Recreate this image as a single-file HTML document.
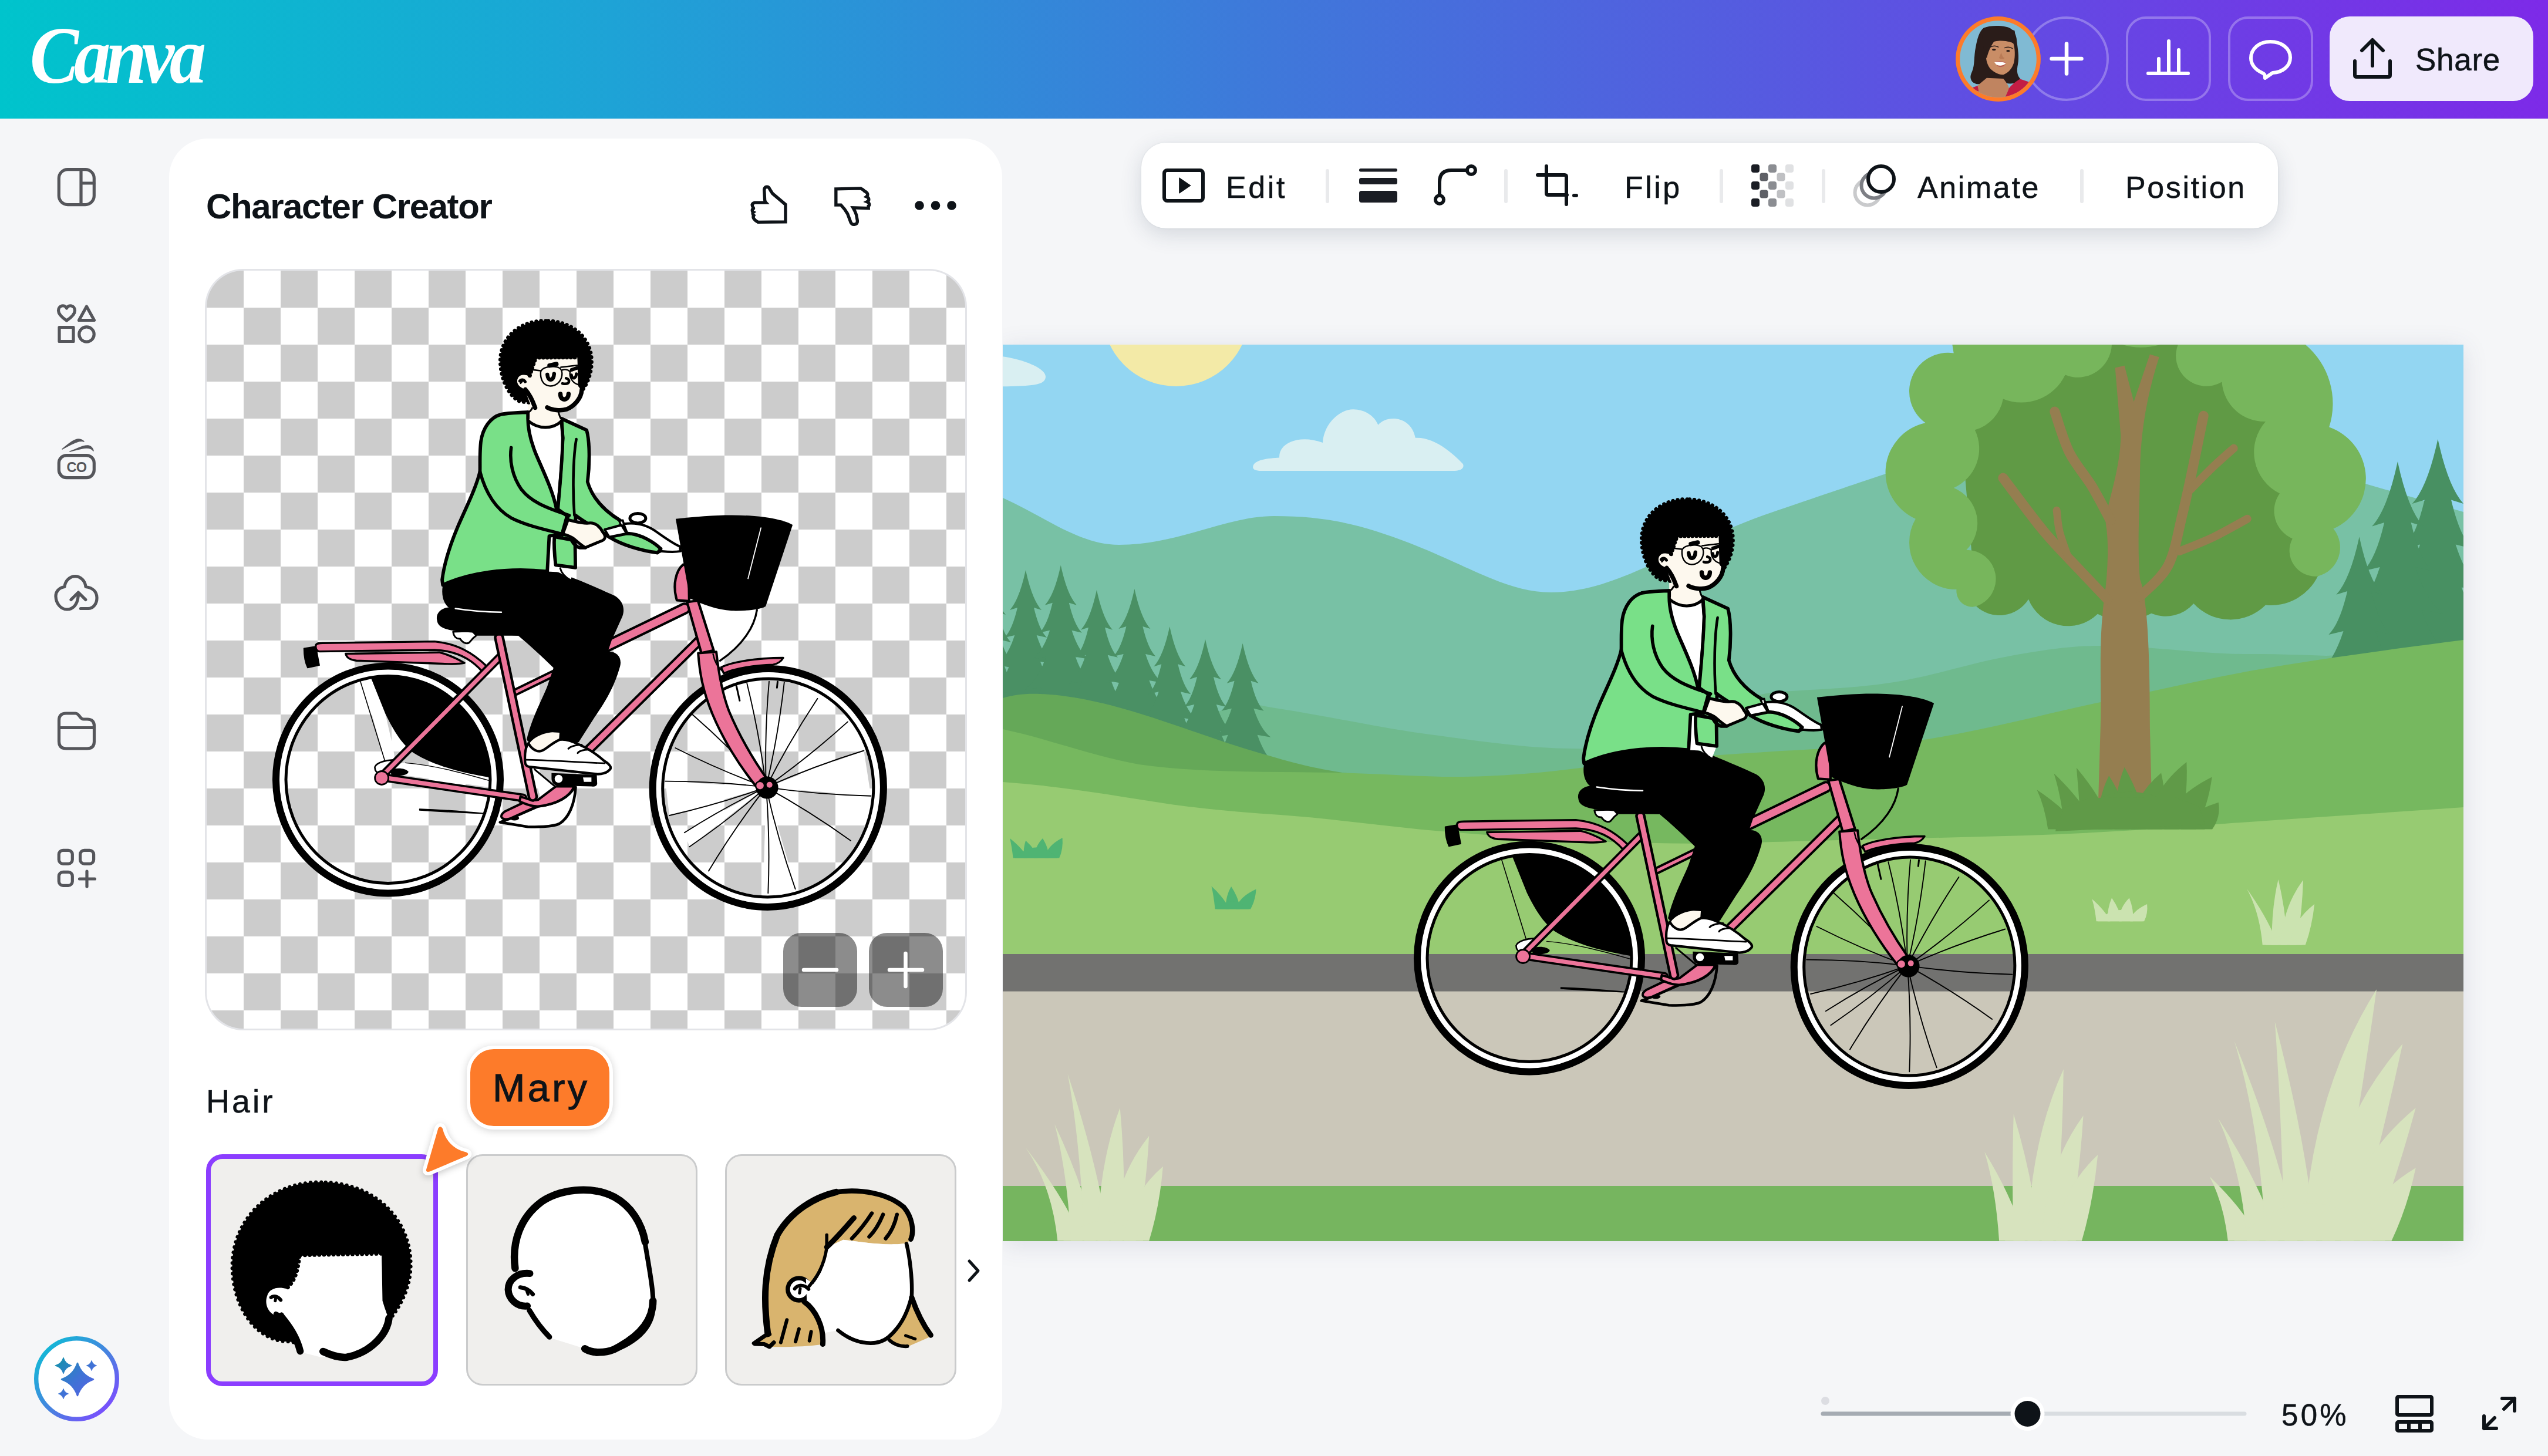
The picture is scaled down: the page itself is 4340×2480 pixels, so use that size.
<!DOCTYPE html>
<html lang="en">
<head>
<meta charset="utf-8">
<title>Canva Character Creator</title>
<style>
*{box-sizing:border-box;margin:0;padding:0}
html,body{width:4340px;height:2480px;overflow:hidden;background:#f5f6f8;font-family:"Liberation Sans",sans-serif;color:#0e1318}
.abs{position:absolute}
#hdr{position:absolute;left:0;top:0;width:4340px;height:202px;background:linear-gradient(90deg,#00c4cc 0%,#1ea3d6 24%,#3f78da 50%,#5e50e2 76%,#7d2ae8 100%)}
#logo{position:absolute;left:50px;top:20px;transform:scaleX(.905);transform-origin:8px 0;font-family:"Liberation Serif",serif;font-style:italic;font-weight:bold;font-size:138px;line-height:150px;color:#fff;letter-spacing:-9px;white-space:nowrap}
.hbtn{position:absolute;top:28px;width:145px;height:144px;border-radius:34px;border:4px solid rgba(255,255,255,.28)}
#share{position:absolute;left:3968px;top:28px;width:347px;height:144px;border-radius:34px;background:#f0e9fc}
#share span{position:absolute;left:146px;top:44px;font-size:53px;line-height:60px;letter-spacing:.7px;color:#0e1318}
#panel{position:absolute;left:288px;top:236px;width:1419px;height:2216px;border-radius:66px;background:#fff}
#title{position:absolute;left:351px;top:318px;font-weight:bold;font-size:60px;line-height:68px;letter-spacing:-1.4px;color:#0e1318;white-space:nowrap}
#checker{position:absolute;left:352px;top:461px;width:1292px;height:1291px;border-radius:62px;overflow:hidden;background-color:#fff;
 background-image:conic-gradient(#fff 25%,#ccc 0 50%,#fff 0 75%,#ccc 0);background-size:126px 126px;background-position:0 0;box-shadow:0 0 0 3px #e3e4e8}
.zbtn{position:absolute;top:1589px;width:126px;height:126px;border-radius:31px;background:rgba(0,0,0,.45)}
#hairlbl{position:absolute;left:351px;top:1842px;font-size:55.5px;line-height:68px;letter-spacing:4px}
.opt{position:absolute;top:1966px;width:394px;height:394px;border-radius:28px;background:#f0efed;border:3px solid #cacbcc;overflow:hidden}
.opt.sel{border:8px solid #8b3dff;left:351px!important;width:395px;height:395px;top:1965.5px}
#mary{position:absolute;left:795px;top:1781px;width:249px;height:143px;border-radius:46px;background:#fd7b2a;border:6px solid #fff;box-shadow:0 2px 14px rgba(0,0,0,.18)}
#mary span{position:absolute;left:38px;top:28px;font-size:66.5px;line-height:76px;color:#0e1318;letter-spacing:4.4px;-webkit-text-stroke:1px #0e1318}
#tb{position:absolute;left:1944px;top:243px;width:1936px;height:146px;border-radius:42px;background:#fff;box-shadow:0 10px 36px rgba(40,55,80,.16),0 0 3px rgba(40,55,80,.10)}
.tbt,#hairlbl,#pct,#share span{-webkit-text-stroke:.5px #0e1318}
.tbt{position:absolute;top:289px;font-size:52px;line-height:60px;color:#0e1318;letter-spacing:2.6px;white-space:nowrap}
.dv{position:absolute;top:288px;width:6px;height:58px;border-radius:3px;background:#e9eaec}
#pct{position:absolute;left:3886px;top:2381px;font-size:51px;line-height:60px;letter-spacing:4.3px}
#stage{position:absolute;left:1708px;top:587px;width:2488px;height:1527px;box-shadow:0 6px 40px rgba(60,70,110,.13);background:#93d6f2;overflow:hidden;clip-path:inset(-80px -80px -80px 0)}
svg{position:absolute;overflow:visible}
</style>
</head>
<body>
<svg width="0" height="0" style="left:0;top:0"><defs><g id="rider"><clipPath id="rwc"><ellipse cx="661" cy="1328" rx="175" ry="177.5"/></clipPath>
<g clip-path="url(#rwc)">
<path d="M620.1,1125.3L701.0,1120.0L818.5,1164.4L862.9,1268.8L857.7,1341.9L831.6,1323.7C792.4,1317.1 740.2,1305.4 703.7,1281.9C682.8,1266.2 669.7,1242.7 656.7,1216.6Z" fill="#000" />
<path d="M610.2,1148.8L655.6,1296.2" fill="none" stroke="#000" stroke-width="1.6" stroke-linejoin="round" stroke-linecap="round" />
<path d="M690.6,1299.4C740.2,1303.3 792.4,1317.6 847.2,1333.6" fill="none" stroke="#000" stroke-width="1.4" stroke-linejoin="round" stroke-linecap="round" />
</g>
<g transform="rotate(0 661 1328)" fill="none"><ellipse cx="661" cy="1328" rx="190.8" ry="193.3" stroke="#000" stroke-width="12.5"/><ellipse cx="661" cy="1328" rx="180.5" ry="183.0" stroke="#fff" stroke-width="9"/><ellipse cx="661" cy="1328" rx="174" ry="176.5" stroke="#000" stroke-width="5"/></g>
<path d="M714.6,1377.9C753.2,1379.0 792.4,1382.4 827.6,1385.8C792.4,1385.0 753.2,1382.4 714.6,1380.0Z" fill="#000" stroke="#000" stroke-width="1.5" stroke-linejoin="round" stroke-linecap="round" />
<g transform="rotate(5 1308.3 1342)" fill="none"><ellipse cx="1308.3" cy="1342" rx="196.3" ry="202.8" stroke="#000" stroke-width="12.5"/><ellipse cx="1308.3" cy="1342" rx="186.0" ry="192.5" stroke="#fff" stroke-width="9"/><ellipse cx="1308.3" cy="1342" rx="179.5" ry="186" stroke="#000" stroke-width="5"/></g>
<path d="M1304.9,1340.9Q1293.9,1251.5 1272.3,1164.1M1304.9,1340.9Q1302.0,1250.6 1310.0,1160.7M1304.9,1340.9Q1325.7,1252.6 1335.8,1162.4M1304.9,1340.9Q1344.1,1262.8 1392.4,1189.9M1304.9,1340.9Q1377.8,1289.3 1444.0,1229.4M1304.9,1340.9Q1386.3,1304.7 1471.4,1278.5M1304.9,1340.9Q1393.7,1353.7 1483.4,1355.7M1304.9,1340.9Q1379.7,1382.1 1449.1,1431.9M1304.9,1340.9Q1324.6,1429.1 1354.7,1514.3M1304.9,1340.9Q1312.0,1430.9 1308.3,1521.2M1304.9,1340.9Q1251.7,1409.2 1207.0,1483.4M1304.9,1340.9Q1242.7,1395.5 1174.4,1442.2M1304.9,1340.9Q1233.0,1375.4 1165.8,1418.2M1304.9,1340.9Q1223.9,1369.9 1140.1,1389.0M1304.9,1340.9Q1219.4,1330.6 1133.2,1330.6M1304.9,1340.9Q1225.6,1312.1 1150.4,1274.0M1304.9,1340.9Q1246.0,1275.3 1179.6,1217.3" stroke="#000" stroke-width="1.9" fill="none" stroke-linecap="round"/>
<path d="M1254.4,1168.6L1259.9,1193.3" fill="none" stroke="#000" stroke-width="3" stroke-linejoin="round" stroke-linecap="round" />
<path d="M1324.5,1161.0L1323.4,1171.3" fill="none" stroke="#000" stroke-width="3" stroke-linejoin="round" stroke-linecap="round" />
<path d="M537.9,1099.2C539.2,1095.2 544.4,1095.2 549.6,1095.2L740.2,1092.6C779.4,1096.5 805.5,1112.2 829.5,1135.2L821.6,1144.1C805.5,1125.3 779.4,1108.3 740.2,1107.0L544.4,1109.6C539.2,1109.6 537.1,1104.4 537.9,1099.2Z" fill="#ec7499" stroke="#000" stroke-width="3.4" stroke-linejoin="round" stroke-linecap="round" />
<path d="M588.8,1113.5L748.0,1111.2C768.9,1116.1 782.0,1124.0 791.1,1129.2C779.4,1132.0 766.3,1131.0 753.2,1130.5L607.1,1125.3C596.6,1124.0 590.1,1120.0 588.8,1113.5Z" fill="#ec7499" stroke="#000" stroke-width="3.4" stroke-linejoin="round" stroke-linecap="round" />
<path d="M517.8,1104.4L537.9,1101.2L543.9,1133.1L524.1,1137.3C519.6,1127.9 517.8,1114.8 517.8,1104.4Z" fill="#000" stroke="#000" stroke-width="2" stroke-linejoin="round" stroke-linecap="round" />
<path d="M851.7,1400.6L869.9,1393.8L916.7,1373.4C950.0,1369.6 971.1,1356.0 977.9,1340.9L980.5,1340.9C978.7,1371.1 968.1,1393.8 953.0,1402.9C940.9,1408.9 910.7,1408.9 898.6,1408.2Z" fill="none" stroke="#000" stroke-width="4.6" stroke-linejoin="round" stroke-linecap="round" />
<path d="M910.7,1310.7L945.4,1339.7" fill="none" stroke="#000" stroke-width="3" stroke-linejoin="round" stroke-linecap="round" />
<ellipse cx="876.2" cy="1393.5" rx="8" ry="4" fill="#000"/>
<path d="M895.6,1365.1L916.7,1372.6L869.9,1393.8C862.3,1396.8 854.8,1395.3 854.0,1390.8C853.6,1387.8 856.3,1384.7 860.8,1381.7Z" fill="#ec7499" stroke="#000" stroke-width="4" stroke-linejoin="round" stroke-linecap="round" />
<path d="M638.4,1306.7C641.0,1298.9 656.7,1294.9 669.7,1294.4L671.0,1304.1L648.8,1318.4C642.3,1317.1 638.4,1313.2 638.4,1306.7Z" fill="#fff" stroke="#000" stroke-width="2.6" stroke-linejoin="round" stroke-linecap="round" />
<path d="M852.4,1118.0L651.4,1321.0" stroke="#000" stroke-width="14.5" stroke-linecap="round"/>
<path d="M852.4,1118.0L651.4,1321.0" stroke="#ec7499" stroke-width="6.9" stroke-linecap="round"/>
<path d="M652.0,1324.2L891.0,1359.0" stroke="#000" stroke-width="14.5" stroke-linecap="round"/>
<path d="M652.0,1324.2L891.0,1359.0" stroke="#ec7499" stroke-width="7.3" stroke-linecap="round"/>
<circle cx="650.1" cy="1325.0" r="11.5" fill="#ec7499" stroke="#000" stroke-width="2.8"/>
<path d="M664.5,1311.9C674.9,1306.7 690.6,1308.0 695.8,1314.5C694.5,1321.0 680.2,1322.3 667.1,1321.0Z" fill="#000" />
<path d="M886.5,1356.8C898.6,1360.6 907.7,1365.1 916.7,1362.1L946.9,1339.4L977.9,1339.4C971.1,1356.0 950.0,1369.6 916.7,1373.4C904.6,1374.2 892.5,1368.1 885.0,1365.1Z" fill="#ec7499" stroke="#000" stroke-width="4" stroke-linejoin="round" stroke-linecap="round" />
<path d="M878,1179L960,1139" stroke="#000" stroke-width="13" stroke-linecap="round"/>
<path d="M878,1179L960,1139" stroke="#ec7499" stroke-width="5" stroke-linecap="round"/>
<path d="M1000,1117L1166,1036.5" stroke="#000" stroke-width="20.5" stroke-linecap="round"/>
<path d="M1000,1117L1166,1036.5" stroke="#ec7499" stroke-width="12.5" stroke-linecap="round"/>
<path d="M985,1294.6L1195,1087" stroke="#000" stroke-width="17.5" stroke-linecap="round"/>
<path d="M985,1294.6L1195,1087" stroke="#ec7499" stroke-width="9.5" stroke-linecap="round"/>
<path d="M1163.6,961.6C1151.3,971.9 1145.1,996.6 1152.9,1022.4L1173.9,1023.8L1172.9,963.6Z" fill="#ec7499" stroke="#000" stroke-width="4.2" stroke-linejoin="round" stroke-linecap="round" />
<path d="M1170.2,1025.5L1188.8,1023.0L1215.6,1107.9L1194.6,1112.4Z" fill="#ec7499" stroke="#000" stroke-width="4.2" stroke-linejoin="round" stroke-linecap="round" />
<path d="M1228.3,1136.7C1244.8,1128.1 1286.0,1120.5 1334.1,1120.5C1330.6,1126.4 1323.8,1130.8 1316.9,1132.2C1286.0,1133.2 1251.7,1138.4 1232.8,1147.0Z" fill="#ec7499" stroke="#000" stroke-width="3.4" stroke-linejoin="round" stroke-linecap="round" />
<path d="M1189.2,1112.6L1220.1,1110.2C1224.2,1148.7 1231.1,1183.0 1241.4,1210.5C1258.5,1251.7 1282.6,1292.9 1306.6,1327.2L1287.7,1339.2C1258.5,1303.2 1231.1,1258.5 1213.9,1217.3C1196.7,1176.1 1191.6,1145.2 1189.2,1112.6Z" fill="#ec7499" stroke="#000" stroke-width="4" stroke-linejoin="round" stroke-linecap="round" />
<path d="M1214.6,1114.3C1217.3,1128.1 1224.2,1138.4 1231.1,1143.5" fill="none" stroke="#000" stroke-width="2.5" stroke-linejoin="round" stroke-linecap="round" />
<circle cx="1306.6" cy="1341.6" r="19" fill="#000"/>
<circle cx="1294.6" cy="1338.2" r="7.5" fill="#ec7499" stroke="#000" stroke-width="2.5"/>
<circle cx="1310.7" cy="1336.8" r="5" fill="#ec7499"/>
<path d="M850,1086L907.5,1357" stroke="#000" stroke-width="17.5" stroke-linecap="round"/>
<path d="M850,1086L907.5,1357" stroke="#ec7499" stroke-width="8.7" stroke-linecap="round"/>
<path d="M939.4,1316.7L1016.5,1319.7L1017.2,1334.9C1016.5,1339.4 1011.9,1340.1 1007.4,1339.4L948.5,1337.9C942.4,1337.1 939.4,1331.8 939.4,1325.8Z" fill="#000" />
<circle cx="951.5" cy="1326.5" r="6.8" fill="#fff"/>
<path d="M993.0,1324.3L1007.4,1324.3L1007.4,1331.8L994.6,1331.8Z" fill="#fff" />
<path d="M771.8,1076.1C773.1,1085.3 778.3,1088.4 783.5,1087.9C788.7,1095.7 796.6,1098.3 800.5,1093.1C804.4,1087.9 807.0,1085.3 810.9,1082.7L809.6,1074.8Z" fill="#fff" stroke="#000" stroke-width="3" stroke-linejoin="round" stroke-linecap="round" />
<path d="M765.2,1034.4C749.6,1035.7 741.8,1046.1 744.4,1056.6C745.7,1069.6 760.0,1074.8 804.4,1077.4L882.7,1082.7L867.0,1043.5Z" fill="#000" />
<path d="M756.1,983.5C804.4,970.4 882.7,962.6 929.6,967.8C961.0,977.0 1013.2,999.1 1047.1,1014.8C1060.1,1022.6 1065.3,1035.7 1060.1,1050.0L1041.9,1090.5L1035.3,1110.1C1049.7,1108.7 1060.1,1119.2 1056.2,1134.8C1049.7,1158.3 1039.2,1184.4 1013.2,1221.0L985.8,1264.0L961.0,1273.2L908.8,1273.2L897.0,1260.1C906.2,1221.0 924.4,1189.6 932.3,1168.8C937.5,1153.1 941.4,1142.7 942.7,1137.5C921.8,1116.6 898.3,1095.7 882.7,1082.7L809.6,1082.7L765.2,1035.7C752.2,1025.2 750.9,1007.0 756.1,988.7Z" fill="#000" />
<path d="M775.7,1036.5C804.4,1040.9 830.5,1042.5 854.0,1042.7" fill="none" stroke="#fff" stroke-width="2.5" stroke-linejoin="round" stroke-linecap="round" />
<path d="M900.1,1266.1C894.8,1272.9 893.3,1283.5 894.4,1298.6C894.8,1303.1 897.1,1305.4 901.6,1306.1L1013.4,1318.2C1024.0,1319.7 1034.6,1316.7 1039.9,1309.2C1041.4,1304.6 1034.6,1299.3 1028.6,1295.6C1016.5,1285.0 998.3,1272.9 983.2,1266.9C974.2,1262.3 962.1,1258.5 953.0,1260.0C940.9,1265.3 931.8,1274.4 924.3,1278.2C916.7,1282.0 906.1,1277.4 900.1,1266.1Z" fill="#fff" />
<path d="M901.6,1266.9C907.7,1256.3 925.8,1248.0 940.9,1247.2L953.0,1248.0L952.2,1259.6C940.9,1265.3 931.8,1274.4 924.3,1278.2C916.7,1281.2 906.9,1276.7 901.6,1266.9Z" fill="#fdf8ee" />
<path d="M900.1,1266.1C894.8,1272.9 893.3,1283.5 894.4,1298.6C894.8,1303.1 897.1,1305.4 901.6,1306.1L1013.4,1318.2C1024.0,1319.7 1034.6,1316.7 1039.9,1309.2C1041.4,1304.6 1034.6,1299.3 1028.6,1295.6C1016.5,1285.0 998.3,1272.9 983.2,1266.9C974.2,1262.3 962.1,1258.5 953.0,1260.0C940.9,1265.3 931.8,1274.4 924.3,1278.2C916.7,1282.0 906.1,1277.4 900.1,1266.1" fill="none" stroke="#000" stroke-width="4.2" stroke-linejoin="round" stroke-linecap="round" />
<path d="M895.6,1294.1C925.8,1294.1 986.2,1298.6 1030.1,1300.1" fill="none" stroke="#000" stroke-width="2.6" stroke-linejoin="round" stroke-linecap="round" />
<path d="M968.1,1275.2C971.1,1271.4 980.2,1269.1 990.8,1268.4M984.0,1282.7C986.2,1278.9 993.8,1277.1 1002.9,1276.7" fill="none" stroke="#000" stroke-width="3" stroke-linejoin="round" stroke-linecap="round" />
<path d="M1289.3,1038.9C1285.2,1066.7 1266.7,1097.6 1226.5,1125.4" fill="none" stroke="#000" stroke-width="3.4" stroke-linejoin="round" stroke-linecap="round" />
<path d="M1150.9,883.7C1184.2,880.2 1215.2,877.5 1246.1,877.5C1287.3,877.5 1328.5,882.2 1350.1,894.0L1304.2,1032.7C1293.5,1038.9 1266.7,1040.9 1246.1,1040.3C1221.3,1038.9 1196.6,1029.6 1175.0,1019.3Z" fill="#000" />
<path d="M1296.1,899.1L1274.1,985.5" fill="none" stroke="#fff" stroke-width="1.8" stroke-linejoin="round" stroke-linecap="round" />
<ellipse cx="1086.4" cy="882.7" rx="13.5" ry="8.2" fill="#fff" stroke="#000" stroke-width="5"/>
<path d="M1061.6,892.5C1081.2,889.5 1101.8,893.6 1118.3,905.9C1132.7,916.2 1147.2,926.5 1157.9,930.7L1159.1,938.9C1147.2,941.0 1136.9,939.9 1126.5,938.9L1118.3,942.0C1101.8,922.4 1081.2,908.0 1064.7,907.0Z" fill="#fff" stroke="#000" stroke-width="4" stroke-linejoin="round" stroke-linecap="round" />
<path d="M956.4,713.0L999.2,732.7C1004.7,752.5 1004.7,789.9 1000.8,820.7C1009.1,849.2 1031.1,871.2 1056.4,886.6L1059.7,888.8L1067.4,908.6L1037.7,914.7C1015.7,899.8 993.7,888.8 980.5,877.8L979.5,920.7L944.3,914.1L949.8,865.7L958.6,745.9Z" fill="#79e088" stroke="#000" stroke-width="5.8" stroke-linejoin="round" stroke-linecap="round" />
<path d="M1037.7,914.7L1067.4,908.6C1092.6,908.6 1116.8,926.2 1125.6,934.9L1120.1,941.5C1092.6,938.2 1059.7,928.4 1037.7,914.7Z" fill="#79e088" stroke="#000" stroke-width="5.8" stroke-linejoin="round" stroke-linecap="round" />
<path d="M1030.0,902.0L1058.6,894.3L1067.4,908.6L1037.7,914.7Z" fill="#fff" stroke="#000" stroke-width="4" stroke-linejoin="round" stroke-linecap="round" />
<path d="M1054.8,887.7L1060.8,886.2L1063.0,894.3L1057.9,895.4Z" fill="#fff" stroke="#000" stroke-width="3.4" stroke-linejoin="round" stroke-linecap="round" />
<path d="M981.6,748.1C976.2,778.9 975.1,833.8 978.4,877.8" fill="none" stroke="#000" stroke-width="4.6" stroke-linejoin="round" stroke-linecap="round" />
<path d="M932.2,913.0L944.3,914.1C943.2,928.4 944.3,943.7 946.5,962.4L980.1,966.8L971.8,987.7L952.0,974.5L932.2,973.4Z" fill="#fff" />
<path d="M954.2,967.9C956.4,976.7 963.0,983.3 971.8,988.1" fill="none" stroke="#000" stroke-width="3" stroke-linejoin="round" stroke-linecap="round" />
<path d="M944.3,914.1L979.5,920.7L980.1,966.8L946.5,962.4C944.3,943.7 943.2,928.4 944.3,914.1Z" fill="#79e088" stroke="#000" stroke-width="5.8" stroke-linejoin="round" stroke-linecap="round" />
<path d="M899.2,688.8L899.2,716.3C916.8,731.6 941.0,731.6 956.4,717.4L953.1,706.4L949.8,693.2Z" fill="#fdf8ee" />
<path d="M899.2,716.3C916.8,731.6 941.0,731.6 956.4,717.4L958.6,745.9C957.5,789.9 953.1,833.8 949.8,865.7L947.6,865.7C941.0,833.8 923.4,798.7 912.4,772.3C903.6,750.3 899.2,730.5 899.2,716.3Z" fill="#fff" stroke="#000" stroke-width="5" stroke-linejoin="round" stroke-linecap="round" />
<path d="M899.2,702.0C883.8,703.1 866.3,703.1 853.1,705.9C835.5,710.8 822.3,728.4 819.0,752.5C816.8,772.3 817.9,789.9 817.5,803.1C811.3,829.5 795.9,860.2 780.5,895.4C767.4,926.2 756.4,961.3 753.1,987.7L754.2,996.5C795.9,976.7 861.9,965.7 932.2,973.4L935.5,913.0L958.6,909.7L966.3,878.9L947.6,865.7C941.0,833.8 923.4,798.7 912.4,772.3C903.6,750.3 899.2,728.4 899.2,713.0Z" fill="#79e088" stroke="#000" stroke-width="5.8" stroke-linejoin="round" stroke-linecap="round" />
<path d="M870.7,762.4C867.4,785.5 872.9,811.9 888.2,833.8C903.6,853.6 927.8,864.6 969.6,877.8" fill="none" stroke="#000" stroke-width="5.6" stroke-linejoin="round" stroke-linecap="round" />
<path d="M817.5,803.1C826.7,838.2 844.3,866.8 870.7,882.2C897.0,895.4 927.8,902.0 958.6,909.7" fill="none" stroke="#000" stroke-width="5.6" stroke-linejoin="round" stroke-linecap="round" />
<path d="M966.9,878.5L958.1,910.1" fill="none" stroke="#000" stroke-width="7.5" stroke-linejoin="round" stroke-linecap="round" />
<path d="M956.4,716.3L958.6,745.9C957.5,789.9 953.1,833.8 950.4,865.7" fill="none" stroke="#000" stroke-width="5.6" stroke-linejoin="round" stroke-linecap="round" />
<path d="M974.0,920.7C978.4,928.4 982.7,931.6 987.1,932.7L997.0,932.7" fill="none" stroke="#000" stroke-width="6" stroke-linejoin="round" stroke-linecap="round" />
<path d="M967.4,885.5C982.7,888.8 993.7,892.1 1002.5,891.0C1013.5,888.8 1022.3,897.6 1026.7,906.4C1033.3,913.0 1031.1,919.6 1023.4,921.8L997.0,932.7C989.3,928.4 982.7,921.8 978.4,918.5C971.8,913.0 963.0,910.8 958.6,909.7Z" fill="#fdf8ee" stroke="#000" stroke-width="5" stroke-linejoin="round" stroke-linecap="round" />
<path d="M929.8,546.4C887.9,545.3 852.2,572.9 852.2,614.8C852.2,643.6 865.2,671.8 882.4,682.4C890.7,685.9 901.6,684.1 906.5,687.3L911.3,693.8L904.4,657.4L984.1,657.4L991.6,665.3C1002.6,650.5 1008.0,632.6 1007.6,614.8C1007.6,575.6 975.1,546.4 929.8,546.4Z" fill="#000" stroke="#000" stroke-width="6.5" stroke-linejoin="round" stroke-linecap="round" stroke-dasharray="0.1 8"/>
<path d="M912.6,609.0L983.8,609.0L985.2,657.4C992.3,665.6 989.6,678.0 978.6,689.0C970.3,697.2 958.0,701.3 945.6,698.6L951.1,701.3L955.2,715.1L901.6,715.1L906.5,694.4C901.6,684.8 896.2,671.1 894.8,662.9C882.4,660.1 878.3,650.5 882.4,643.6C885.2,638.1 893.4,636.8 901.6,640.9Z" fill="#fdf8ee" />
<path d="M983.4,606.5L984.7,657.4C989.6,662.9 991.6,665.6 992.3,667.7C1003.3,650.5 1011.5,629.9 1006.0,605.2Z" fill="#000" />
<path d="M911.9,609.0L983.4,608.7" fill="none" stroke="#000" stroke-width="7" stroke-linejoin="round" stroke-linecap="round" stroke-dasharray="0.1 6.6"/>
<path d="M913.3,607.9C909.9,616.2 905.8,628.5 902.3,640.2" fill="none" stroke="#000" stroke-width="7" stroke-linejoin="round" stroke-linecap="round" stroke-dasharray="0.1 6.6"/>
<path d="M896.2,602.4L914.0,607.9L902.3,640.9L894.8,638.1Z" fill="#000" />
<path d="M990.9,664.2C990.2,678.0 978.6,691.7 964.8,697.2C955.2,700.2 940.1,698.6 932.1,693.9" fill="none" stroke="#000" stroke-width="7.5" stroke-linejoin="round" stroke-linecap="round" />
<path d="M894.8,663.5C901.6,671.1 907.1,682.1 911.5,694.4" fill="none" stroke="#000" stroke-width="7.5" stroke-linejoin="round" stroke-linecap="round" />
<path d="M906.5,695.1C905.1,698.6 902.3,701.3 898.2,703.4" fill="none" stroke="#000" stroke-width="3" stroke-linejoin="round" stroke-linecap="round" />
<path d="M951.1,701.6C952.5,706.8 953.8,710.9 955.9,713.7" fill="none" stroke="#000" stroke-width="3" stroke-linejoin="round" stroke-linecap="round" />
<path d="M885.4,649.1C887.9,645.7 892.3,646.4 894.5,650.2" fill="none" stroke="#000" stroke-width="5" stroke-linejoin="round" stroke-linecap="round" />
<path d="M890.0,647.7C889.3,650.5 887.9,651.9 886.8,652.6" fill="none" stroke="#000" stroke-width="3" stroke-linejoin="round" stroke-linecap="round" />
<path d="M920.9,634.0C922.3,625.8 937.4,623.0 948.3,625.1C956.6,626.5 958.7,634.0 956.6,642.3C953.8,651.9 945.6,658.0 936.0,657.4C925.0,656.0 920.2,646.4 920.9,634.0Z" fill="none" stroke="#000" stroke-width="2.4" stroke-linejoin="round" stroke-linecap="round" />
<path d="M971.0,632.6C969.6,640.9 973.1,651.9 985.4,655.3M971.0,632.6C974.4,629.9 979.9,628.5 984.1,628.2" fill="none" stroke="#000" stroke-width="2.4" stroke-linejoin="round" stroke-linecap="round" />
<path d="M955.2,625.5L983.0,622.3M957.7,630.2C962.1,628.5 967.6,629.9 971.0,632.9M905.8,629.6L920.9,631.5" fill="none" stroke="#000" stroke-width="2.6" stroke-linejoin="round" stroke-linecap="round" />
<path d="M936.0,622.7L947.7,620.0" fill="none" stroke="#000" stroke-width="7.5" stroke-linejoin="round" stroke-linecap="round" />
<path d="M973.8,629.9L983.4,626.5" fill="none" stroke="#000" stroke-width="6" stroke-linejoin="round" stroke-linecap="round" />
<path d="M932.3,638.1C932.7,643.6 935.2,647.2 938.2,646.8C941.5,646.1 943.5,642.3 943.8,636.8" fill="none" stroke="#000" stroke-width="6.5" stroke-linejoin="round" stroke-linecap="round" />
<path d="M973.3,638.7C973.6,642.3 975.5,644.4 977.7,644.0C980.2,643.3 981.5,640.3 981.6,636.8" fill="none" stroke="#000" stroke-width="5" stroke-linejoin="round" stroke-linecap="round" />
<path d="M964.1,644.3C971.7,645.7 971.7,656.0 958.0,653.2" fill="none" stroke="#000" stroke-width="4.6" stroke-linejoin="round" stroke-linecap="round" />
<path d="M954.5,671.1C954.5,678.0 958.0,680.4 961.5,680.2C965.7,679.6 968.3,675.9 968.4,671.1" fill="none" stroke="#000" stroke-width="7.5" stroke-linejoin="round" stroke-linecap="round" /></g></defs></svg>
<div id="hdr"></div>
<div id="logo">Canva</div>

<!-- avatar + header buttons -->
<div class="abs" style="left:3448px;top:28px;width:144px;height:144px;border-radius:72px;border:4px solid rgba(255,255,255,.28)"></div>
<svg style="left:3448px;top:28px" width="144" height="144" viewBox="0 0 144 144"><path d="M72 46.500v51M46.500 72h51" stroke="#fff" stroke-width="6.5" stroke-linecap="round" fill="none"/></svg>
<svg id="avatar" style="left:3331px;top:28px" width="145" height="145" viewBox="0 0 145 145">
 <defs><clipPath id="avc"><circle cx="72.500" cy="72.500" r="65.300"/></clipPath></defs>
 <circle cx="72.500" cy="72.500" r="72.400" fill="#fd7b2a"/>
 <g clip-path="url(#avc)">
  <rect width="145" height="145" fill="#80bad3"/>
  <g transform="scale(.12362) translate(-172 -143)">
   <path d="M560 300C640 270 760 265 860 285C960 300 1010 380 1015 480C1030 600 1050 700 1030 800C1010 900 1020 960 1070 1010C1020 1070 900 1090 820 1040L600 1010C560 1080 460 1100 400 1040C370 1000 370 960 400 900C440 800 420 700 450 560C470 450 500 340 560 300Z" fill="#2a1c19"/>
   <path d="M470 1100L600 990L830 1000C880 1060 900 1100 910 1140L860 1340L440 1340Z" fill="#c08460"/>
   <path d="M1060 1005L1180 1045L1120 1170L850 1270C880 1200 900 1160 905 1135C940 1090 1000 1040 1060 1005Z" fill="#c31d44"/>
   <path d="M400 1125L475 1098L490 1175L430 1160Z" fill="#c31d44"/>
   <path d="M690 480C780 470 900 480 965 505C990 580 995 680 975 780C950 860 900 920 830 945C760 950 680 900 640 850C600 790 585 720 595 660C610 590 640 520 690 480Z" fill="#c98d66"/>
   <path d="M560 300C700 280 900 300 985 340C1000 420 990 480 975 520C900 470 780 470 700 490C650 560 620 640 600 720C560 640 520 420 560 300Z" fill="#2a1c19"/>
   <path d="M705 772C760 760 820 765 865 785C840 825 770 830 730 805Z" fill="#fff"/>
   <path d="M700 770C760 750 830 760 870 785C820 770 760 765 700 770Z" fill="#b4504f"/>
   <path d="M730 808C770 835 830 830 860 795C840 850 760 850 730 808Z" fill="#b4504f"/>
   <ellipse cx="700" cy="600" rx="26" ry="14" fill="#2a1c19"/><ellipse cx="895" cy="618" rx="24" ry="13" fill="#2a1c19"/>
   <path d="M650 565C690 545 730 548 760 565M850 575C890 560 930 565 955 585" stroke="#2a1c19" stroke-width="12" fill="none" stroke-linecap="round"/>
   <path d="M800 640C815 690 830 715 850 715C830 735 790 735 770 715" fill="#b97a55"/>
  </g>
 </g>
</svg>
<div class="hbtn" style="left:3621px"></div>
<svg style="left:3621px;top:28px" width="145" height="144" viewBox="0 0 145 144"><path d="M38 97h68M56 97V72M73 97V42M90 97V57" stroke="#fff" stroke-width="6" stroke-linecap="round" fill="none"/></svg>
<div class="hbtn" style="left:3795px"></div>
<svg style="left:3795px;top:28px" width="145" height="144" viewBox="0 0 145 144"><path d="M72 43c-19 0-33 12-33 28 0 11 8 20 19 25 3 1 5 3 5 7v2l13-9c18-1 30-12 30-26 0-15-14-27-34-27z" stroke="#fff" stroke-width="6" stroke-linejoin="round" fill="none"/></svg>
<div id="share"><span>Share</span></div>
<svg style="left:3968px;top:28px" width="347" height="144" viewBox="0 0 347 144"><path d="M43 76v24q0 3 3 3h54q3 0 3-3V76M73 84V42M55 58l18-18 18 18" stroke="#0e1318" stroke-width="6" stroke-linecap="round" stroke-linejoin="round" fill="none"/></svg>

<!-- sidebar -->
<svg id="side" style="left:0;top:202px" width="288" height="2278" viewBox="0 202 288 2278" fill="none" stroke="#55565b" stroke-width="5.2" stroke-linecap="round" stroke-linejoin="round">
 <rect x="100.3" y="288.6" width="60" height="60" rx="15"/><path d="M138 289v59M138 312h22"/>
 <path d="M113.500 546c-9-6-14-11-14-17 0-9 11-11 14-4 3-7 14-5 14 4 0 6-5 11-14 17z"/><path d="M147.500 522l13 23.500h-26z"/><rect x="101" y="557.500" width="24" height="24"/><circle cx="147.500" cy="569.500" r="12.700"/>
 <rect x="100.300" y="775.600" width="60" height="38" rx="13"/>
 <path d="M106 765c9-7 18-16 27-17 5 0 8 2 10 4-8-3-22 5-37 13zM119 769c12-4 22-11 31-10 5 1 8 4 9 9-6-9-20-4-40 1z" fill="#55565b" stroke-width="1.500"/>
 <path d="M137.5 1036.500H150C159 1036.500 165 1028 165 1018.700C165 1008 158 1001 146 999.500C145 989 137 981.600 128 981.600C119 981.600 111 989 110 999.500C100 1001 95 1008 95 1015C95 1027 103 1038 114 1038C124 1038 133.400 1030 133.400 1010.400M121 1021.400L133.400 1009L145.800 1021.400"/>
 <path d="M100.500 1227q0-12 12-12h16c7 0 7 10 14 10h6q12 0 12 12v26q0 12-12 12h-36q-12 0-12-12zM100.500 1239.500h60"/>
 <rect x="100.300" y="1448.300" width="23" height="23" rx="7"/><rect x="136.600" y="1448.300" width="23" height="23" rx="7"/><rect x="100.300" y="1485.300" width="23" height="23" rx="7"/><path d="M148 1484v26M135.500 1497h26"/>
</svg>
<svg style="left:100px;top:775px" width="60" height="40" viewBox="0 0 60 40"><text x="30.500" y="28.800" text-anchor="middle" font-family="Liberation Sans,sans-serif" font-weight="bold" font-size="23.500" fill="#55565b" letter-spacing="-.5">CO</text></svg>

<!-- magic button -->
<svg style="left:58px;top:2276px" width="145" height="145" viewBox="0 0 145 145">
 <defs><linearGradient id="mg" x1="0" y1="0" x2="1" y2="1"><stop offset="0.100" stop-color="#12b9d6"/><stop offset="0.550" stop-color="#4a7fe0"/><stop offset="0.900" stop-color="#7c4dff"/></linearGradient>
 <linearGradient id="mg2" gradientUnits="userSpaceOnUse" x1="34" y1="34" x2="108" y2="108"><stop offset="0.100" stop-color="#178fb0"/><stop offset="0.500" stop-color="#3d74d4"/><stop offset="1" stop-color="#5e5de8"/></linearGradient></defs>
 <circle cx="72.500" cy="72.500" r="68.800" fill="#fff" stroke="url(#mg)" stroke-width="7.400"/>
 <g fill="url(#mg2)">
 <path d="M74 46Q81 66.500 101 73.500Q81 80.500 74 101Q67 80.500 47 73.500Q67 66.500 74 46Z" stroke="url(#mg2)" stroke-width="2.500" stroke-linejoin="round"/>
 <path d="M50 36.500Q53 47 64 50Q53 53 50 63.500Q47 53 36 50Q47 47 50 36.500Z" stroke="url(#mg2)" stroke-width="1.200" stroke-linejoin="round"/>
 <path d="M98 41.500Q100 48 106.500 50Q100 52 98 58.500Q96 52 89.500 50Q96 48 98 41.500Z" stroke="url(#mg2)" stroke-width="1" stroke-linejoin="round"/>
 <path d="M50 89.500Q52 96 58.500 98Q52 100 50 106.500Q48 100 41.500 98Q48 96 50 89.500Z" stroke="url(#mg2)" stroke-width="1" stroke-linejoin="round"/>
 </g>
</svg>

<!-- panel -->
<div id="panel"></div>
<div id="title">Character Creator</div>
<svg style="left:1270px;top:305px" width="380" height="90" viewBox="1270 305 380 90" fill="none" stroke="#0e1318" stroke-width="5.800" stroke-linejoin="round" stroke-linecap="round">
 <path d="M1340.400 379.400V347.300L1316.300 326.900Q1313 322 1311.200 318.800C1309 313 1302 313 1301 319.800L1302 339.200Q1302.500 342 1304.100 343.700H1283.500Q1278 345 1278.800 349C1279 352 1281.500 353 1281.200 354.500C1278 356 1278 360 1281 361.500C1279 363 1279.500 366 1281.600 367.500C1280 370 1280.500 372 1282 374Q1285 378 1289.800 380Z" stroke-linejoin="miter" transform="translate(1310 349) scale(.92) translate(-1310 -348)"/>
 <path d="M1421.400 319.800L1467.300 318.800Q1472 321 1474.500 323.900C1480 326 1482 331 1478 334C1483 336 1484 341 1479 343.500C1484 345.500 1484 350 1481.500 351.500L1481.600 355.500L1453.100 354.500Q1457 361 1459.200 367.800L1461.200 379C1461.500 386 1452 388 1449 382L1442.900 365.700Q1438 357 1430.600 349.400H1421.400Z" stroke-linejoin="miter" transform="translate(1452 351.500) scale(.92) translate(-1452 -352)"/>
 <g fill="#0e1318" stroke="none"><circle cx="1566" cy="350" r="7.800"/><circle cx="1593.500" cy="350" r="7.800"/><circle cx="1621" cy="350" r="7.800"/></g>
</svg>
<div id="checker"></div>
<svg style="left:352px;top:461px" width="1292" height="1291" viewBox="352 461 1292 1291"><defs><clipPath id="ckc"><rect x="352" y="461" width="1292" height="1291" rx="62"/></clipPath></defs><g clip-path="url(#ckc)"><clipPath id="rwc2"><ellipse cx="661" cy="1328" rx="175" ry="177.5"/></clipPath><g clip-path="url(#rwc2)"><path d="M611.0,1138.3L622.7,1135.7L656.7,1216.6C661.9,1242.7 669.7,1268.8 672.8,1294.9L656.1,1297.0Z" fill="#fff"/><path d="M667.1,1302.8L690.6,1298.9C740.2,1302.8 792.4,1317.1 831.6,1323.7L862.9,1336.7L857.7,1344.5L674.9,1318.4Z" fill="#fff"/></g>
<path d="M1289.3,1037.8C1285.2,1066.7 1266.7,1097.6 1226.5,1125.4L1215.2,1107.9L1188.8,1023.0L1204.9,1030.6L1246.1,1039.9Z" fill="#fff"/>
<path d="M851.7,1400.6L869.9,1393.8L916.7,1373.4C950.0,1369.6 971.1,1356.0 977.9,1340.9L980.5,1340.9C978.7,1371.1 968.1,1393.8 953.0,1402.9C940.9,1408.9 910.7,1408.9 898.6,1408.2Z" fill="#fff"/><path d="M909.2,1309.2L945.4,1339.4L918.2,1351.5Z" fill="#fff"/>
<path d="M1304.9,1340.9L1471.4,1278.5L1483.4,1355.7Z" fill="#fff"/>
<path d="M1304.9,1340.9L1299.7,1522.9L1356.4,1515.4Z" fill="#fff"/>
<path d="M1304.9,1340.9L1133.2,1330.6L1140.1,1389.0Z" fill="#fff"/>
<path d="M1304.9,1340.9L1165.8,1418.2L1174.4,1442.2Z" fill="#fff"/><use href="#rider"/></g></svg>
<!-- zoom buttons -->
<div class="zbtn" style="left:1334px"></div>
<div class="zbtn" style="left:1480px"></div>
<svg style="left:1334px;top:1589px" width="272" height="126" viewBox="0 0 272 126"><path d="M35 63h56M181 63h56M208.500 35v56" stroke="#fff" stroke-width="6.500" stroke-linecap="round" fill="none"/></svg>

<div id="hairlbl">Hair</div>
<div class="opt sel" style="left:352px"></div>
<div class="opt" style="left:794px"></div>
<div class="opt" style="left:1235px"></div>
<svg style="left:1640px;top:2140px" width="40" height="50" viewBox="1640 2140 40 50"><path d="M1651 2148l15 16.500-15 16.500" stroke="#0e1318" stroke-width="5" stroke-linecap="round" stroke-linejoin="round" fill="none"/></svg>
<svg style="left:352px;top:1967px" width="1280" height="393" viewBox="352 1967 1280 393">
<path d="M547.3,2013.5C464.0,2011.4 395.5,2074.0 395.5,2156.7C395.5,2215.8 425.6,2270.4 472.9,2283.1C487.6,2286.6 499.5,2283.7 505.4,2289.6L512.8,2302.9L529.0,2245.3L647.1,2215.8L664.8,2246.8C688.5,2215.8 699.7,2186.2 699.7,2153.8C699.7,2074.0 635.3,2013.5 547.3,2013.5Z" fill="#000" stroke="#000" stroke-width="6" stroke-linejoin="round" stroke-linecap="round" stroke-dasharray="0.1 9"/>
<path d="M509.8,2139.0L650.1,2135.4L651.5,2215.8C656.0,2230.5 660.4,2242.3 661.9,2245.3C658.9,2274.8 629.4,2304.4 591.0,2311.7C576.2,2313.2 558.5,2308.8 546.7,2311.7L514.2,2303.5C508.3,2280.7 493.6,2263.0 478.8,2242.3C458.1,2242.3 449.3,2221.7 455.2,2206.9C458.1,2195.1 472.9,2190.7 487.6,2195.1C499.5,2186.2 505.4,2174.4 509.8,2139.0Z" fill="#fff" />
<path d="M511.3,2137.8L649.5,2135.2" fill="none" stroke="#000" stroke-width="7" stroke-linejoin="round" stroke-linecap="round" stroke-dasharray="0.1 8"/>
<path d="M650.1,2133.1L653.0,2215.8C657.4,2230.5 661.3,2240.9 663.4,2245.3L673.7,2215.8L664.8,2133.1Z" fill="#000" />
<path d="M662.5,2245.3C658.9,2274.8 629.4,2304.4 591.0,2311.7C576.2,2313.2 561.5,2307.3 550.3,2302.0" fill="none" stroke="#000" stroke-width="12.5" stroke-linejoin="round" stroke-linecap="round" />
<path d="M478.8,2242.3C493.6,2260.1 505.4,2277.8 511.3,2301.4" fill="none" stroke="#000" stroke-width="12" stroke-linejoin="round" stroke-linecap="round" />
<path d="M509.8,2140.5C506.8,2168.5 500.9,2183.3 487.6,2195.1" fill="none" stroke="#000" stroke-width="7" stroke-linejoin="round" stroke-linecap="round" stroke-dasharray="0.1 8"/>
<path d="M461.7,2209.9C465.5,2206.3 472.9,2207.5 478.2,2214.3" fill="none" stroke="#000" stroke-width="6" stroke-linejoin="round" stroke-linecap="round" />
<path d="M469.9,2209.9L468.8,2215.8" fill="none" stroke="#000" stroke-width="5" stroke-linejoin="round" stroke-linecap="round" />
<path d="M469.9,2237.9C474.4,2240.9 477.3,2240.9 479.4,2239.4" fill="none" stroke="#000" stroke-width="8" stroke-linejoin="round" stroke-linecap="round" />
<path d="M877.4,2159.7C871.5,2115.4 886.3,2074.0 921.7,2047.4C951.3,2026.8 1004.4,2017.9 1045.8,2038.6C1078.3,2056.3 1096.0,2088.8 1100.4,2121.3C1107.8,2174.4 1116.6,2215.8 1110.7,2239.4C1101.9,2274.8 1060.5,2301.4 1016.2,2305.8L995.6,2297.0L936.5,2278.4L901.1,2230.5C877.4,2230.5 862.7,2209.9 865.6,2192.1C868.6,2174.4 883.4,2167.0 904.0,2169.1Z" fill="#fff" />
<path d="M877.4,2160.3C871.5,2115.4 886.3,2074.0 921.7,2047.4C951.3,2026.8 1004.4,2017.9 1045.8,2038.6C1075.3,2054.8 1093.0,2082.9 1098.9,2115.4" fill="none" stroke="#000" stroke-width="12.5" stroke-linejoin="round" stroke-linecap="round" />
<path d="M1095.4,2097.7C1104.8,2156.7 1116.6,2209.9 1111.3,2237.9C1103.4,2274.8 1060.5,2301.4 1016.2,2305.8C1007.4,2304.4 1000.0,2301.4 995.6,2297.0" fill="none" stroke="#000" stroke-width="8" stroke-linejoin="round" stroke-linecap="round" />
<path d="M1112.2,2215.8C1112.2,2245.3 1093.0,2274.8 1045.8,2298.5C1031.0,2304.4 1010.3,2305.8 996.2,2297.3" fill="none" stroke="#000" stroke-width="12.5" stroke-linejoin="round" stroke-linecap="round" />
<path d="M902.5,2169.1C880.4,2167.0 865.6,2180.3 865.6,2196.6C866.2,2212.8 880.4,2226.1 898.1,2224.6" fill="none" stroke="#000" stroke-width="12" stroke-linejoin="round" stroke-linecap="round" />
<path d="M886.3,2192.7C895.2,2193.6 902.5,2198.1 907.6,2204.5" fill="none" stroke="#000" stroke-width="7" stroke-linejoin="round" stroke-linecap="round" />
<path d="M897.5,2199.5L899.3,2204.5" fill="none" stroke="#000" stroke-width="5" stroke-linejoin="round" stroke-linecap="round" />
<path d="M901.7,2232.0C912.9,2251.2 924.7,2266.0 935.9,2277.2" fill="none" stroke="#000" stroke-width="9" stroke-linejoin="round" stroke-linecap="round" />
<path d="M1307.8,2271.9C1300.4,2215.8 1300.4,2162.6 1324.0,2103.6C1347.6,2062.2 1389.0,2038.6 1424.4,2030.3C1465.8,2023.8 1513.0,2032.7 1539.6,2056.3C1554.3,2074.0 1557.3,2097.6 1551.4,2110.9L1544.0,2117.7C1510.1,2122.7 1465.8,2115.4 1436.2,2111.8L1408.2,2124.8C1403.8,2156.7 1389.0,2180.3 1377.2,2192.1L1368.3,2215.8C1389.0,2230.5 1403.8,2260.1 1401.4,2289.6C1377.2,2294.0 1332.9,2294.9 1312.2,2294.0L1301.9,2289.6L1284.2,2288.1L1303.4,2274.8Z" fill="#d9b46e" />
<path d="M1552.9,2206.9C1563.2,2239.4 1575.0,2260.1 1586.2,2274.8L1580.9,2278.4L1545.5,2294.0L1524.8,2289.6L1513.0,2282.2C1530.7,2263.0 1545.5,2239.4 1552.9,2206.9Z" fill="#d9b46e" />
<path d="M1408.2,2124.8L1436.2,2111.8C1465.8,2115.4 1510.1,2122.7 1544.0,2117.7C1549.9,2141.9 1554.3,2180.3 1552.9,2206.9C1545.5,2239.4 1530.7,2263.0 1513.0,2277.8C1495.3,2292.5 1465.8,2292.5 1451.0,2283.7L1427.4,2266.0L1403.2,2270.4C1397.8,2245.3 1389.0,2230.5 1369.8,2217.2L1378.7,2192.1C1391.9,2177.4 1403.8,2156.7 1408.2,2124.8Z" fill="#fff" />
<path d="M1307.8,2271.9C1300.4,2215.8 1300.4,2162.6 1324.0,2103.6C1347.6,2062.2 1389.0,2038.6 1424.4,2030.3" fill="none" stroke="#000" stroke-width="11" stroke-linejoin="round" stroke-linecap="round" />
<path d="M1418.5,2031.2C1465.8,2023.8 1513.0,2032.7 1539.6,2056.3C1554.3,2074.0 1557.3,2097.6 1551.4,2110.9" fill="none" stroke="#000" stroke-width="8.5" stroke-linejoin="round" stroke-linecap="round" />
<path d="M1544.0,2118.3C1549.9,2141.9 1554.3,2180.3 1552.9,2206.9C1545.5,2239.4 1530.7,2263.0 1513.0,2277.8C1495.3,2292.5 1459.9,2292.5 1427.4,2266.0" fill="none" stroke="#000" stroke-width="6.5" stroke-linejoin="round" stroke-linecap="round" />
<path d="M1552.9,2209.9C1563.2,2239.4 1575.0,2260.1 1585.4,2274.2" fill="none" stroke="#000" stroke-width="9" stroke-linejoin="round" stroke-linecap="round" />
<path d="M1514.5,2282.2C1521.9,2289.6 1533.7,2294.0 1545.5,2293.1" fill="none" stroke="#000" stroke-width="6" stroke-linejoin="round" stroke-linecap="round" />
<path d="M1542.5,2274.8L1558.8,2280.7" fill="none" stroke="#000" stroke-width="5" stroke-linejoin="round" stroke-linecap="round" />
<path d="M1408.2,2103.6L1408.2,2124.8C1403.8,2156.7 1389.0,2180.3 1377.2,2192.1" fill="none" stroke="#000" stroke-width="5.5" stroke-linejoin="round" stroke-linecap="round" />
<path d="M1369.8,2217.2C1389.0,2230.5 1403.8,2260.1 1401.4,2289.6" fill="none" stroke="#000" stroke-width="9" stroke-linejoin="round" stroke-linecap="round" />
<path d="M1454.5,2074.6C1439.2,2091.7 1424.4,2109.5 1408.2,2124.2" fill="none" stroke="#000" stroke-width="9" stroke-linejoin="round" stroke-linecap="round" />
<path d="M1485.0,2066.6C1474.6,2082.9 1462.8,2097.6 1451.0,2109.5M1504.1,2068.7C1498.2,2082.9 1490.9,2096.2 1480.5,2106.5M1527.8,2068.7C1524.8,2082.9 1518.9,2097.6 1508.6,2109.5" fill="none" stroke="#000" stroke-width="6.5" stroke-linejoin="round" stroke-linecap="round" />
<path d="M1340.3,2248.2L1329.9,2286.6M1360.9,2263.6L1355.0,2285.2M1381.6,2268.3L1378.7,2283.7" fill="none" stroke="#000" stroke-width="6" stroke-linejoin="round" stroke-linecap="round" />
<path d="M1284.2,2288.1L1303.4,2274.8L1310.7,2272.5M1285.6,2289.0L1301.9,2289.6L1310.7,2294.0L1318.1,2286.6" fill="none" stroke="#000" stroke-width="7" stroke-linejoin="round" stroke-linecap="round" />
<circle cx="1360.9" cy="2196.0" r="19" fill="#fff" stroke="#000" stroke-width="7.5"/>
<path d="M1372.7,2177.4L1384.6,2186.2L1389.0,2206.9L1374.2,2215.8Z" fill="#fff" />
<path d="M1353.6,2195.1C1359.5,2187.7 1369.8,2187.7 1377.2,2195.7" fill="none" stroke="#000" stroke-width="6" stroke-linejoin="round" stroke-linecap="round" />
<path d="M1363.0,2195.1L1361.8,2202.5" fill="none" stroke="#000" stroke-width="5" stroke-linejoin="round" stroke-linecap="round" />
<path d="M1377.2,2192.1C1384.6,2183.3 1391.9,2174.4 1397.3,2162.6" fill="none" stroke="#000" stroke-width="5.5" stroke-linejoin="round" stroke-linecap="round" />
</svg><div id="stage"><svg style="left:0;top:0" width="2488" height="1527" viewBox="0 0 2488 1527"><rect width="2488" height="1527" fill="#93d6f2"/>
<circle cx="295" cy="-54" r="125" fill="#f3eaa7"/>
<path d="M0,20.3 C29.7,24.2 73.0,38.8 73.0,54.8 C72.6,70.5 44.1,69.8 0,71.3Z" fill="#d9eff2"/>
<path d="M426.4,206.9C428.8,195.8 452.8,193.4 471.1,192.4C469.6,167.0 505.7,152.5 545.1,167.0C546.6,135.7 573.0,110.2 597.0,110.2C616.3,110.2 633.1,121.3 639.4,136.7C654.7,118.9 695.6,121.3 702.8,158.8C731.7,157.3 760.5,179.0 783.6,203.0C787.4,210.2 779.7,215.0 770.1,215.0L440.8,215.0C428.8,215.0 424.9,211.7 426.4,206.9Z" fill="#d9eff2"/>
<path d="M0,261 C70,292 130,341 198,341 C300,341 380,292 462,292 C560,292 620,310 693,338 C800,380 860,422 934,422 C1050,422 1150,340 1312,285 C1400,255 1450,238 1504,220 C1700,160 2000,130 2321,237 L2488,285 V900 H0Z" fill="#78c1a5"/>
<path d="M330,640 L400,612 C430,610 440,616 470,620 C560,634 640,652 713,662 C820,676 900,690 1002,688 C1100,680 1200,610 1312,592 C1400,586 1440,586 1504,577 C1580,566 1640,545 1697,534 C1770,520 1820,513 1870,513 C1960,513 2040,528 2129,527 C2180,527 2220,529 2254,530 L2488,520 V900 H330Z" fill="#6fba8e"/>
<path d="M-22,392 Q-11.2,442.3 5.0,460.0 L-8.0,456.0 Q0.8,493.7 14.0,507.0 L-3.3,503.0 Q8.4,539.3 26.0,552.0 L3.0,548.0 Q17.8,589.4 40.0,604.0 L10.2,600.0 Q28.5,645.9 56.0,662.0 L18.6,658.0 L67.7,732.0 L-111.7,732.0 L-62.6,658.0 L-100.0,662.0 Q-72.5,645.9 -54.2,600.0 L-54.2,600.0 L-84.0,604.0 Q-61.8,589.4 -47.0,548.0 L-47.0,548.0 L-70.0,552.0 Q-52.4,539.3 -40.7,503.0 L-40.7,503.0 L-58.0,507.0 Q-44.8,493.7 -36.0,456.0 L-36.0,456.0 L-49.0,460.0 Q-32.8,442.3 -22.0,392.0Z" fill="#4a9064"/>
<path d="M39,384 Q49.8,434.3 66.0,452.0 L53.0,448.0 Q61.8,485.7 75.0,499.0 L57.7,495.0 Q69.4,531.3 87.0,544.0 L64.0,540.0 Q78.8,581.4 101.0,596.0 L71.2,592.0 Q89.5,637.9 117.0,654.0 L79.6,650.0 L128.7,724.0 L-50.7,724.0 L-1.6,650.0 L-39.0,654.0 Q-11.5,637.9 6.8,592.0 L6.8,592.0 L-23.0,596.0 Q-0.8,581.4 14.0,540.0 L14.0,540.0 L-9.0,544.0 Q8.6,531.3 20.3,495.0 L20.3,495.0 L3.0,499.0 Q16.2,485.7 25.0,448.0 L25.0,448.0 L12.0,452.0 Q28.2,434.3 39.0,384.0Z" fill="#4a9064"/>
<path d="M98.8,375.7 Q109.6,426.0 125.8,443.7 L112.8,439.7 Q121.6,477.4 134.8,490.7 L117.5,486.7 Q129.2,523.0 146.8,535.7 L123.8,531.7 Q138.6,573.1 160.8,587.7 L131.0,583.7 Q149.3,629.6 176.8,645.7 L139.4,641.7 L188.5,715.7 L9.1,715.7 L58.2,641.7 L20.8,645.7 Q48.3,629.6 66.6,583.7 L66.6,583.7 L36.8,587.7 Q59.0,573.1 73.8,531.7 L73.8,531.7 L50.8,535.7 Q68.4,523.0 80.1,486.7 L80.1,486.7 L62.8,490.7 Q76.0,477.4 84.8,439.7 L84.8,439.7 L71.8,443.7 Q88.0,426.0 98.8,375.7Z" fill="#4a9064"/>
<path d="M160,417.8 Q170.8,468.1 187.0,485.8 L174.0,481.8 Q182.8,519.5 196.0,532.8 L178.7,528.8 Q190.4,565.1 208.0,577.8 L185.0,573.8 Q199.8,615.2 222.0,629.8 L192.2,625.8 Q210.5,671.7 238.0,687.8 L200.6,683.8 L249.7,757.8 L70.3,757.8 L119.4,683.8 L82.0,687.8 Q109.5,671.7 127.8,625.8 L127.8,625.8 L98.0,629.8 Q120.2,615.2 135.0,573.8 L135.0,573.8 L112.0,577.8 Q129.6,565.1 141.3,528.8 L141.3,528.8 L124.0,532.8 Q137.2,519.5 146.0,481.8 L146.0,481.8 L133.0,485.8 Q149.2,468.1 160.0,417.8Z" fill="#4a9064"/>
<path d="M224.4,416 Q235.2,466.3 251.4,484.0 L238.4,480.0 Q247.2,517.7 260.4,531.0 L243.1,527.0 Q254.8,563.3 272.4,576.0 L249.4,572.0 Q264.2,613.4 286.4,628.0 L256.6,624.0 Q274.9,669.9 302.4,686.0 L265.0,682.0 L314.1,756.0 L134.7,756.0 L183.8,682.0 L146.4,686.0 Q173.9,669.9 192.2,624.0 L192.2,624.0 L162.4,628.0 Q184.6,613.4 199.4,572.0 L199.4,572.0 L176.4,576.0 Q194.0,563.3 205.7,527.0 L205.7,527.0 L188.4,531.0 Q201.6,517.7 210.4,480.0 L210.4,480.0 L197.4,484.0 Q213.6,466.3 224.4,416.0Z" fill="#4a9064"/>
<path d="M284.3,480.3 Q295.1,530.6 311.3,548.3 L298.3,544.3 Q307.1,582.0 320.3,595.3 L303.0,591.3 Q314.7,627.6 332.3,640.3 L309.3,636.3 Q324.1,677.7 346.3,692.3 L316.5,688.3 Q334.8,734.2 362.3,750.3 L324.9,746.3 L374.0,820.3 L194.6,820.3 L243.7,746.3 L206.3,750.3 Q233.8,734.2 252.1,688.3 L252.1,688.3 L222.3,692.3 Q244.5,677.7 259.3,636.3 L259.3,636.3 L236.3,640.3 Q253.9,627.6 265.6,591.3 L265.6,591.3 L248.3,595.3 Q261.5,582.0 270.3,544.3 L270.3,544.3 L257.3,548.3 Q273.5,530.6 284.3,480.3Z" fill="#4a9064"/>
<path d="M345,501.9 Q355.8,552.2 372.0,569.9 L359.0,565.9 Q367.8,603.6 381.0,616.9 L363.7,612.9 Q375.4,649.2 393.0,661.9 L370.0,657.9 Q384.8,699.3 407.0,713.9 L377.2,709.9 Q395.5,755.8 423.0,771.9 L385.6,767.9 L434.7,841.9 L255.3,841.9 L304.4,767.9 L267.0,771.9 Q294.5,755.8 312.8,709.9 L312.8,709.9 L283.0,713.9 Q305.2,699.3 320.0,657.9 L320.0,657.9 L297.0,661.9 Q314.6,649.2 326.3,612.9 L326.3,612.9 L309.0,616.9 Q322.2,603.6 331.0,565.9 L331.0,565.9 L318.0,569.9 Q334.2,552.2 345.0,501.9Z" fill="#4a9064"/>
<path d="M408.6,508.8 Q419.4,559.1 435.6,576.8 L422.6,572.8 Q431.4,610.5 444.6,623.8 L427.3,619.8 Q439.0,656.1 456.6,668.8 L433.6,664.8 Q448.4,706.2 470.6,720.8 L440.8,716.8 Q459.1,762.7 486.6,778.8 L449.2,774.8 L498.3,848.8 L318.9,848.8 L368.0,774.8 L330.6,778.8 Q358.1,762.7 376.4,716.8 L376.4,716.8 L346.6,720.8 Q368.8,706.2 383.6,664.8 L383.6,664.8 L360.6,668.8 Q378.2,656.1 389.9,619.8 L389.9,619.8 L372.6,623.8 Q385.8,610.5 394.6,572.8 L394.6,572.8 L381.6,576.8 Q397.8,559.1 408.6,508.8Z" fill="#4a9064"/>
<path d="M2444.4,160.8 Q2461.9,242.3 2488.1,271.0 L2467.1,264.5 Q2481.4,325.6 2502.7,347.1 L2474.7,340.6 Q2493.7,399.4 2522.2,420.0 L2484.8,413.5 Q2508.8,480.7 2544.8,504.2 L2496.6,497.8 Q2526.3,572.1 2570.8,598.2 L2510.1,591.7 L2589.7,711.6 L2299.1,711.6 L2378.7,591.7 L2318.0,598.2 Q2362.5,572.1 2392.2,497.8 L2392.2,497.8 L2344.0,504.2 Q2380.0,480.7 2404.0,413.5 L2404.0,413.5 L2366.6,420.0 Q2395.1,399.4 2414.1,340.6 L2414.1,340.6 L2386.1,347.1 Q2407.4,325.6 2421.7,264.5 L2421.7,264.5 L2400.7,271.0 Q2426.9,242.3 2444.4,160.8Z" fill="#489062"/>
<path d="M2375.9,199.3 Q2393.4,280.8 2419.6,309.5 L2398.6,303.0 Q2412.9,364.1 2434.2,385.6 L2406.2,379.1 Q2425.2,437.9 2453.7,458.5 L2416.3,452.0 Q2440.3,519.2 2476.3,542.7 L2428.1,536.3 Q2457.8,610.6 2502.3,636.7 L2441.6,630.2 L2521.2,750.1 L2230.6,750.1 L2310.2,630.2 L2249.5,636.7 Q2294.0,610.6 2323.7,536.3 L2323.7,536.3 L2275.5,542.7 Q2311.5,519.2 2335.5,452.0 L2335.5,452.0 L2298.1,458.5 Q2326.6,437.9 2345.6,379.1 L2345.6,379.1 L2317.6,385.6 Q2338.9,364.1 2353.2,303.0 L2353.2,303.0 L2332.2,309.5 Q2358.4,280.8 2375.9,199.3Z" fill="#489062"/>
<path d="M2310.6,327.2 Q2326.3,400.2 2349.8,425.8 L2331.0,420.0 Q2343.7,474.7 2362.8,493.9 L2337.7,488.1 Q2354.7,540.7 2380.2,559.2 L2346.8,553.4 Q2368.3,613.5 2400.5,634.6 L2357.3,628.8 Q2383.9,695.3 2423.7,718.7 L2369.4,712.9 L2440.7,820.2 L2180.5,820.2 L2251.8,712.9 L2197.5,718.7 Q2237.3,695.3 2263.9,628.8 L2263.9,628.8 L2220.7,634.6 Q2252.9,613.5 2274.4,553.4 L2274.4,553.4 L2241.0,559.2 Q2266.5,540.7 2283.5,488.1 L2283.5,488.1 L2258.4,493.9 Q2277.5,474.7 2290.2,420.0 L2290.2,420.0 L2271.4,425.8 Q2294.9,400.2 2310.6,327.2Z" fill="#489062"/>
<path d="M0,602 C20,596 40,594 64,595 C120,597 180,612 232,628 C310,652 380,680 453,700 C500,714 540,724 600,732 L600,800 H0Z" fill="#65a858"/>
<path d="M0,655 C80,672 150,700 232,715 C340,730 450,727 569,729 C650,731 720,737 785,736 C860,735 930,728 992,720 C1100,708 1200,700 1312,693 C1400,688 1490,684 1576,672 C1680,655 1780,628 1870,609 C1960,590 2040,572 2129,555 C2250,534 2380,517 2488,503 V900 H0Z" fill="#76b85f"/>
<path d="M0,745 C100,752 190,768 280,782 C350,792 410,797 473,801 C570,808 660,822 761,830 C900,842 1050,850 1192,850 C1240,850 1280,848 1312,847 C1460,843 1600,840 1745,836 C1860,832 1970,825 2081,816 C2220,806 2360,797 2488,788 V1040 H0Z" fill="#97cb72"/>
<rect x="0" y="1038" width="2488" height="64" fill="#727270"/>
<rect x="0" y="1101.600" width="2488" height="333" fill="#cbc7b9"/>
<rect x="0" y="1433" width="2488" height="94" fill="#76b55f"/>
<path d="M1619.7,-0.4 L1658.2,445.8 A58.6,58.6 0 0 0 1747.1,433.8 A72.5,72.5 0 0 0 1864.9,458.8 A95.6,95.6 0 0 0 1956.3,457.8 A63.0,63.0 0 0 0 2028.4,441.0 A84.9,84.9 0 0 0 2151.0,443.4 A88.6,88.6 0 0 0 2239.9,394.4 L2218.3,-0.4Z" fill="#609a45"/>
<path d="M1617.3,-0.4 L1619.7,14.5 A65.9,65.9 0 0 0 1571.6,133.3 A86.5,86.5 0 0 0 1554.8,296.8 A80.1,80.1 0 0 0 1624.5,417.0 A27.1,27.1 0 0 0 1658.2,445.8 A49.4,49.4 0 0 0 1641.3,349.7 A64.8,64.8 0 0 0 1619.7,243.9 A72.8,72.8 0 0 0 1655.8,145.3 A68.3,68.3 0 0 0 1703.9,92.4 A82.4,82.4 0 0 0 1809.6,51.6 A58.0,58.0 0 0 0 1889.0,-0.4Z" fill="#77b65c"/>
<path d="M2218.3,-0.4 A131.3,131.3 0 0 1 2259.2,140.5 A93.1,93.1 0 0 1 2266.4,313.6 A50.3,50.3 0 0 1 2239.9,394.4 A43.8,43.8 0 0 1 2196.7,330.4 A51.3,51.3 0 0 1 2175.0,253.5 A78.6,78.6 0 0 1 2151.0,130.9 A72.3,72.3 0 0 1 2076.5,63.6 A51.9,51.9 0 0 1 2001.9,-0.4Z" fill="#77b65c"/>
<path d="M1905.8,-0.4 Q1937.0,10.0 1973.1,-0.4Z" fill="#77b65c"/>
<path d="M1865.9,781.9L1869.7,653.0C1872.1,578.0 1864.9,505.9 1878.4,414.6C1881.7,385.7 1884.2,337.6 1879.3,308.8C1874.5,284.8 1903.4,222.2 1904.3,154.9L1894.7,39.5L1910.6,35.7L1926.5,97.2L1953.9,16.5L1969.7,21.3C1951.5,78.0 1937.0,145.3 1937.0,222.2C1936.1,289.6 1932.2,347.3 1937.0,400.1C1951.5,433.8 1953.9,554.0 1953.9,653.0L1957.2,781.9Z" fill="#957e50"/>
<path d="M1886.6,299.2 C1881.4,289.6 1866.9,260.7 1855.3,241.5 C1843.7,222.3 1827.4,205.0 1816.8,183.8 C1806.2,162.6 1796.0,125.7 1791.8,114.1" fill="none" stroke="#957e50" stroke-width="17" stroke-linecap="round" stroke-linejoin="round"/>
<path d="M1881.7,433.8 C1874.1,425.8 1854.1,404.9 1836.1,385.7 C1818.1,366.5 1795.6,344.8 1773.6,318.4 C1751.6,292.0 1715.5,242.3 1703.9,227.1" fill="none" stroke="#957e50" stroke-width="17" stroke-linecap="round" stroke-linejoin="round"/>
<path d="M1814.4,361.7 C1812.0,354.5 1803.2,331.6 1800.0,318.4 C1796.8,305.2 1796.0,288.3 1795.2,282.3" fill="none" stroke="#957e50" stroke-width="13" stroke-linecap="round" stroke-linejoin="round"/>
<path d="M1937.0,429.0 C1945.0,420.2 1973.1,399.3 1985.1,376.1 C1997.1,352.9 2002.0,318.5 2009.2,289.6 C2016.4,260.8 2022.4,231.1 2028.4,203.0 C2034.4,174.9 2042.4,134.9 2045.2,121.3" fill="none" stroke="#957e50" stroke-width="17" stroke-linecap="round" stroke-linejoin="round"/>
<path d="M2023.6,246.3 C2030.0,239.9 2049.8,219.4 2062.0,207.8 C2074.2,196.2 2090.9,181.8 2096.7,176.6" fill="none" stroke="#957e50" stroke-width="14" stroke-linecap="round" stroke-linejoin="round"/>
<path d="M2004.4,352.1 C2014.0,348.1 2042.8,337.2 2062.0,328.0 C2081.2,318.8 2110.1,302.0 2119.7,296.8" fill="none" stroke="#957e50" stroke-width="14" stroke-linecap="round" stroke-linejoin="round"/>
<path d="M1780.3,825.5 Q1774.8,786.5 1761.5,758.2 Q1815.4,794.5 1833.6,825.5Z" fill="#609a48"/>
<path d="M1808.6,825.5 Q1803.2,770.3 1790.4,730.3 Q1844.0,781.7 1861.9,825.5Z" fill="#609a48"/>
<path d="M1836.9,825.5 Q1832.8,764.7 1828.9,720.7 Q1876.4,777.3 1890.2,825.5Z" fill="#609a48"/>
<path d="M1865.2,825.5 Q1864.3,772.5 1884.2,734.2 Q1915.5,783.5 1918.5,825.5Z" fill="#609a48"/>
<path d="M1893.5,825.5 Q1892.4,764.1 1910.6,719.7 Q1943.0,776.8 1946.9,825.5Z" fill="#609a48"/>
<path d="M1921.9,825.5 Q1924.8,769.8 1973.1,729.4 Q1985.0,781.3 1975.2,825.5Z" fill="#609a48"/>
<path d="M1950.2,825.5 Q1954.9,759.1 2016.4,711.1 Q2019.3,772.9 2003.5,825.5Z" fill="#609a48"/>
<path d="M1978.5,825.5 Q1985.0,773.9 2059.6,736.6 Q2053.6,784.6 2031.8,825.5Z" fill="#609a48"/>
<path d="M2006.8,825.5 Q2011.3,799.0 2070.7,779.8 Q2075.0,804.5 2060.1,825.5Z" fill="#609a48"/>
<path d="M1792.8,825.5 Q1920.1999999999998,698.1 2047.6,825.5Z" fill="#609a48"/>
<path d="M1792.8,828.9 L1807.2,789.5 L1850.5,772.6 L1994.7,770.2 L2038.0,787.1 L2047.6,817.3Z" fill="#609a48"/>
<path d="M17.6,874.6 Q15.5,855.1 12.2,840.9 Q35.0,859.1 42.0,874.6Z" fill="#4fb473"/>
<path d="M35.7,874.6 Q34.6,857.3 39.1,844.8 Q56.6,860.9 60.1,874.6Z" fill="#4fb473"/>
<path d="M53.7,874.6 Q54.0,855.1 68.0,840.9 Q79.0,859.1 78.1,874.6Z" fill="#4fb473"/>
<path d="M71.8,874.6 Q73.9,854.5 101.6,839.9 Q103.2,858.6 96.2,874.6Z" fill="#4fb473"/>
<path d="M20.8,874.6 Q56.9,838.5 93.0,874.6Z" fill="#4fb473"/>
<path d="M361.6,961.6 Q359.4,939.0 355.5,922.6 Q378.5,943.7 385.7,961.6Z" fill="#4fb473"/>
<path d="M379.7,961.6 Q379.4,939.3 389.1,923.1 Q402.8,943.9 403.9,961.6Z" fill="#4fb473"/>
<path d="M397.9,961.6 Q400.4,941.8 431.5,927.4 Q430.6,945.9 422.0,961.6Z" fill="#4fb473"/>
<path d="M364.6,961.6 Q391.8,934.4000000000001 419.0,961.6Z" fill="#4fb473"/>
<path d="M1862.6,982.3 Q1860.3,960.3 1855.3,944.3 Q1878.7,964.8 1886.4,982.3Z" fill="#cbe3b0"/>
<path d="M1881.8,982.3 Q1881.2,959.2 1889.0,942.4 Q1903.8,963.9 1905.7,982.3Z" fill="#cbe3b0"/>
<path d="M1901.0,982.3 Q1901.7,959.2 1918.8,942.4 Q1927.2,963.9 1924.9,982.3Z" fill="#cbe3b0"/>
<path d="M1920.3,982.3 Q1922.3,965.2 1949.1,952.9 Q1950.9,968.8 1944.1,982.3Z" fill="#cbe3b0"/>
<path d="M1864.9,982.3 Q1903.35,943.85 1941.8,982.3Z" fill="#cbe3b0"/>
<path d="M2145.7,1022.6 Q2140.9,966.9 2118.8,926.5 Q2155.9,978.4 2171.9,1022.6Z" fill="#cbe3b0"/>
<path d="M2161.3,1022.6 Q2161.1,957.9 2172.6,911.1 Q2186.8,971.3 2187.6,1022.6Z" fill="#cbe3b0"/>
<path d="M2176.9,1022.6 Q2179.9,958.5 2214.9,912.1 Q2213.1,971.8 2203.2,1022.6Z" fill="#cbe3b0"/>
<path d="M2192.6,1022.6 Q2196.0,982.2 2234.2,952.9 Q2230.2,990.5 2218.8,1022.6Z" fill="#cbe3b0"/>
<path d="M2151.0,1022.6 Q2182.25,991.35 2213.5,1022.6Z" fill="#cbe3b0"/>
<path d="M93.3,1526.4 Q84.2,1434.4 39.0,1367.7 Q105.7,1453.4 135.9,1526.4Z" fill="#d7e3be"/>
<path d="M116.0,1526.4 Q110.1,1411.4 88.4,1328.1 Q139.0,1435.2 158.6,1526.4Z" fill="#d7e3be"/>
<path d="M138.6,1526.4 Q132.7,1361.8 110.7,1242.6 Q161.5,1395.9 181.2,1526.4Z" fill="#d7e3be"/>
<path d="M161.3,1526.4 Q163.3,1395.0 199.7,1299.9 Q210.7,1422.2 203.9,1526.4Z" fill="#d7e3be"/>
<path d="M183.9,1526.4 Q189.2,1422.9 249.1,1347.9 Q244.1,1444.3 226.5,1526.4Z" fill="#d7e3be"/>
<path d="M206.6,1526.4 Q212.0,1453.0 272.9,1399.8 Q267.2,1468.2 249.2,1526.4Z" fill="#d7e3be"/>
<path d="M103.3,1526.4 Q171.25,1458.45 239.2,1526.4Z" fill="#d7e3be"/>
<path d="M1697.1,1526.4 Q1691.4,1438.6 1672.3,1375.1 Q1722.3,1456.8 1741.0,1526.4Z" fill="#d7e3be"/>
<path d="M1721.3,1526.4 Q1718.7,1401.4 1721.8,1310.8 Q1756.6,1427.2 1765.2,1526.4Z" fill="#d7e3be"/>
<path d="M1745.5,1526.4 Q1750.2,1356.9 1806.8,1234.2 Q1805.2,1392.0 1789.5,1526.4Z" fill="#d7e3be"/>
<path d="M1769.8,1526.4 Q1775.6,1402.8 1840.5,1313.3 Q1833.2,1428.4 1813.7,1526.4Z" fill="#d7e3be"/>
<path d="M1794.0,1526.4 Q1799.9,1441.5 1865.2,1380.0 Q1857.6,1459.1 1837.9,1526.4Z" fill="#d7e3be"/>
<path d="M1706.9,1526.4 Q1767.5,1465.8000000000002 1828.1,1526.4Z" fill="#d7e3be"/>
<path d="M2086.8,1526.4 Q2079.8,1463.0 2055.6,1417.1 Q2117.3,1476.1 2140.5,1526.4Z" fill="#d7e3be"/>
<path d="M2119.0,1526.4 Q2109.9,1405.6 2070.4,1318.2 Q2142.5,1430.6 2172.7,1526.4Z" fill="#d7e3be"/>
<path d="M2151.1,1526.4 Q2141.4,1329.1 2097.6,1186.2 Q2172.7,1369.9 2204.8,1526.4Z" fill="#d7e3be"/>
<path d="M2183.2,1526.4 Q2178.0,1310.1 2166.8,1153.5 Q2219.6,1354.9 2236.9,1526.4Z" fill="#d7e3be"/>
<path d="M2215.4,1526.4 Q2227.1,1278.0 2339.9,1098.2 Q2308.1,1329.4 2269.1,1526.4Z" fill="#d7e3be"/>
<path d="M2247.5,1526.4 Q2260.7,1331.9 2384.4,1191.1 Q2345.2,1372.2 2301.2,1526.4Z" fill="#d7e3be"/>
<path d="M2279.6,1526.4 Q2291.7,1395.0 2406.7,1299.9 Q2373.4,1422.2 2333.3,1526.4Z" fill="#d7e3be"/>
<path d="M2311.8,1526.4 Q2319.9,1454.4 2406.7,1402.3 Q2392.7,1469.3 2365.5,1526.4Z" fill="#d7e3be"/>
<path d="M2097.6,1526.4 Q2226.1499999999996,1397.8500000000001 2354.7,1526.4Z" fill="#d7e3be"/><use href="#rider" transform="translate(236 -283)"/></svg></div>
<!-- Mary tag + cursor -->
<div id="mary"><span>Mary</span></div>
<svg style="left:700px;top:1890px" width="130" height="130" viewBox="700 1890 130 130"><path d="M746.500 1921.500Q750.500 1916 754 1922.500C758 1940 770 1957 794 1962.500Q800.500 1965.500 794.500 1969L732 1995.500Q724 1997.500 726.500 1990.500Z" fill="#fd7b2a" stroke="#fff" stroke-width="12" stroke-linejoin="round" paint-order="stroke fill" style="filter:drop-shadow(0 3px 6px rgba(0,0,0,.22))"/></svg>

<!-- toolbar -->
<div id="tb"></div>
<div class="dv" style="left:2258px"></div><div class="dv" style="left:2562px"></div><div class="dv" style="left:2929px"></div><div class="dv" style="left:3103px"></div><div class="dv" style="left:3543px"></div>
<div class="tbt" style="left:2088px;letter-spacing:3.6px">Edit</div>
<div class="tbt" style="left:2767px;letter-spacing:3.5px">Flip</div>
<div class="tbt" style="left:3266px">Animate</div>
<div class="tbt" style="left:3620px">Position</div>
<svg style="left:1944px;top:243px" width="1936" height="146" viewBox="1944 243 1936 146" fill="none" stroke="#0e1318" stroke-width="6" stroke-linecap="round" stroke-linejoin="round">
 <rect x="1983" y="290" width="66" height="52" rx="5"/><path d="M2009 303l19 13-19 13z" fill="#0e1318" stroke-width="1"/>
 <g fill="#1a1d24" stroke="none"><rect x="2315" y="287" width="65" height="5.500" rx="2.700"/><rect x="2315" y="303" width="65" height="11" rx="3.500"/><rect x="2315" y="325" width="65" height="20" rx="4"/></g>
 <path d="M2452 330v-20q0-20 20-20h24"/><circle cx="2452" cy="340" r="7"/><circle cx="2506" cy="290" r="7"/>
 <path d="M2634 283v46q0 3 3 3h32M2619 298h46q3 0 3 3v47M2681 333h4"/>
 <g stroke="none">
  <rect x="2983" y="280" width="14" height="14" rx="4" fill="#1a1d24"/><rect x="3012" y="280" width="14" height="14" rx="4" fill="#8b8d92"/><rect x="3041" y="280" width="14" height="14" rx="4" fill="#e0e1e3"/>
  <rect x="2997.500" y="294.500" width="14" height="14" rx="4" fill="#5e6066"/><rect x="3026.500" y="294.500" width="14" height="14" rx="4" fill="#bfc0c3"/>
  <rect x="2983" y="309" width="14" height="14" rx="4" fill="#1a1d24"/><rect x="3012" y="309" width="14" height="14" rx="4" fill="#8b8d92"/><rect x="3041" y="309" width="14" height="14" rx="4" fill="#e0e1e3"/>
  <rect x="2997.500" y="323.500" width="14" height="14" rx="4" fill="#5e6066"/><rect x="3026.500" y="323.500" width="14" height="14" rx="4" fill="#bfc0c3"/>
  <rect x="2983" y="338" width="14" height="14" rx="4" fill="#1a1d24"/><rect x="3012" y="338" width="14" height="14" rx="4" fill="#8b8d92"/><rect x="3041" y="338" width="14" height="14" rx="4" fill="#e0e1e3"/>
 </g>
 <circle cx="3181" cy="328" r="21.500" stroke="#c9cacc"/><circle cx="3192" cy="316" r="21.500" stroke="#7d7f85" fill="#fff"/><circle cx="3204" cy="305" r="22" fill="#fff"/>
</svg>

<!-- bottom controls -->
<svg style="left:3090px;top:2360px" width="1220" height="100" viewBox="3090 2360 1220 100" fill="none" stroke-linecap="round" stroke-linejoin="round">
 <path d="M3105 2408h718" stroke="#d9dde1" stroke-width="7"/><path d="M3105 2408h348" stroke="#a5abb3" stroke-width="7"/>
 <circle cx="3109" cy="2386" r="7" fill="#dcdde2"/>
 <circle cx="3453.500" cy="2408" r="29" fill="#fff"/><circle cx="3453.500" cy="2408" r="22" fill="#0e1318"/>
 <g stroke="#0e1318" stroke-width="6"><rect x="4083" y="2379" width="59" height="31" rx="2"/><rect x="4083" y="2422" width="59" height="15" rx="2"/><path d="M4103 2422v15M4122 2422v15"/>
 <path d="M4262 2382h21v21M4283 2382l-18 18M4252 2433h-21v-21M4231 2433l18-18"/></g>
</svg>
<div id="pct">50%</div>
</body></html>
